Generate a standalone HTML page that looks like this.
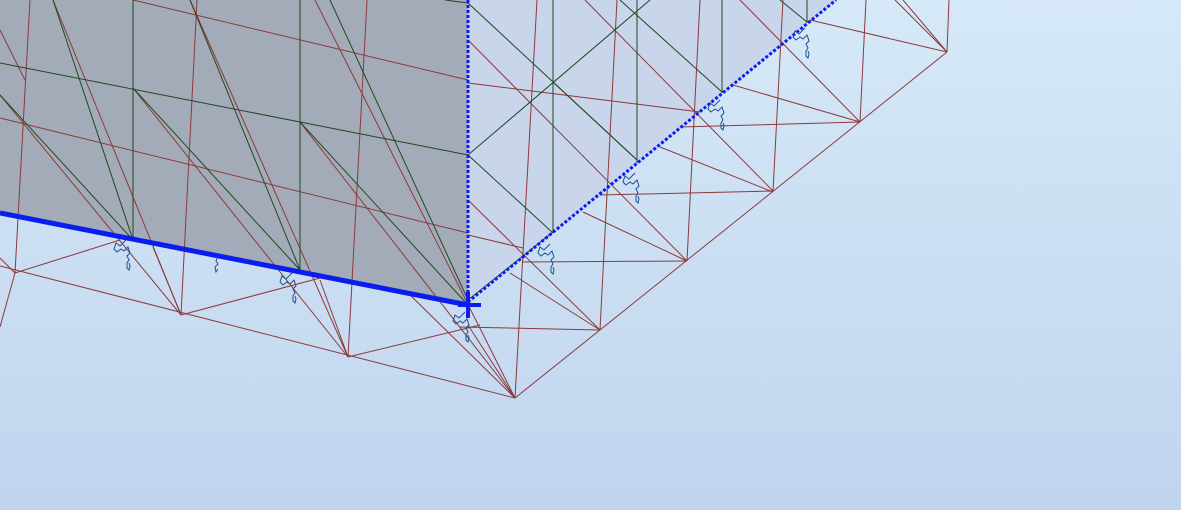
<!DOCTYPE html>
<html><head><meta charset="utf-8"><style>
html,body{margin:0;padding:0;width:1181px;height:510px;overflow:hidden}
svg{display:block}
</style></head><body>
<svg width="1181" height="510" viewBox="0 0 1181 510" xmlns="http://www.w3.org/2000/svg">
<defs><linearGradient id="bg" x1="0" y1="0" x2="0" y2="1">
<stop offset="0" stop-color="#d6e9f8"/><stop offset="1" stop-color="#c0d4ee"/></linearGradient>
<path id="s" d="M0,0 l-6,6 l-4,-3 l-2,6 l3,3 l4,-3 l3,2 l4,-4 l2,6 l-3,3 l2,4 l-2,3 l0,5 l2,2 l1,-4 l-1,-3"/>
</defs>
<rect width="1181" height="510" fill="url(#bg)"/>
<polygon points="0,0 468,0 468,305 0,213" fill="#a3abb9"/>
<polygon points="468,0 836,0 468,303" fill="#c9d5ea"/>
<g stroke="#8b3a3a" stroke-width="1" fill="none">
<line x1="0" y1="266" x2="515" y2="398"/>
<line x1="0" y1="258" x2="15" y2="273"/>
<line x1="15" y1="273" x2="120" y2="240"/>
<line x1="181" y1="315" x2="320" y2="278"/>
<line x1="348" y1="357" x2="480" y2="325"/>
<line x1="153" y1="247" x2="181" y2="315"/>
<line x1="320" y1="280" x2="348" y2="357"/>
<line x1="30" y1="0" x2="15" y2="273"/>
<line x1="197" y1="0" x2="181" y2="315"/>
<line x1="367" y1="0" x2="348" y2="357"/>
<line x1="53" y1="0" x2="181" y2="315"/>
<line x1="0" y1="95" x2="181" y2="315"/>
<line x1="190" y1="0" x2="348" y2="357"/>
<line x1="133" y1="88" x2="348" y2="357"/>
<line x1="315" y1="0" x2="515" y2="398"/>
<line x1="300" y1="122" x2="515" y2="398"/>
<line x1="133" y1="0" x2="468" y2="80"/>
<line x1="0" y1="118" x2="468" y2="233"/>
<line x1="0" y1="30" x2="25" y2="80"/>
<line x1="515" y1="398" x2="947" y2="52"/>
<line x1="537" y1="0" x2="515" y2="398"/>
<line x1="617" y1="0" x2="600" y2="330"/>
<line x1="700" y1="0" x2="687" y2="261"/>
<line x1="783" y1="0" x2="773" y2="191"/>
<line x1="866" y1="0" x2="860" y2="122"/>
<line x1="949" y1="0" x2="947" y2="52"/>
<line x1="460" y1="327" x2="600" y2="330"/>
<line x1="522" y1="262" x2="687" y2="261"/>
<line x1="600" y1="195" x2="773" y2="191"/>
<line x1="680" y1="127" x2="860" y2="122"/>
<line x1="810" y1="20" x2="947" y2="52"/>
<line x1="733" y1="85" x2="860" y2="122"/>
<line x1="660" y1="147" x2="773" y2="192"/>
<line x1="583" y1="212" x2="687" y2="261"/>
<line x1="510" y1="273" x2="600" y2="330"/>
<line x1="0" y1="327" x2="15" y2="273"/>
<line x1="515" y1="398" x2="405" y2="290"/>
<line x1="600" y1="330" x2="468" y2="200"/>
<line x1="687" y1="261" x2="468" y2="40"/>
<line x1="773" y1="191" x2="585" y2="0"/>
<line x1="860" y1="122" x2="740" y2="0"/>
<line x1="947" y1="52" x2="895" y2="0"/>
<line x1="947" y1="52" x2="903" y2="0"/>
<line x1="468" y1="83" x2="700" y2="112"/>
<line x1="468" y1="235" x2="523" y2="248"/>
<line x1="468" y1="325" x2="515" y2="398"/>
</g>
<g stroke="#1e4a1e" stroke-width="1" fill="none">
<line x1="133" y1="0" x2="133" y2="240"/>
<line x1="300" y1="0" x2="300" y2="270"/>
<line x1="53" y1="0" x2="133" y2="240"/>
<line x1="0" y1="95" x2="133" y2="240"/>
<line x1="190" y1="0" x2="300" y2="270"/>
<line x1="133" y1="88" x2="300" y2="270"/>
<line x1="330" y1="0" x2="468" y2="300"/>
<line x1="300" y1="122" x2="468" y2="305"/>
<line x1="0" y1="63" x2="468" y2="155"/>
<line x1="445" y1="0" x2="468" y2="3"/>
<line x1="553" y1="0" x2="553" y2="233"/>
<line x1="637" y1="0" x2="637" y2="163"/>
<line x1="722" y1="0" x2="722" y2="93"/>
<line x1="807" y1="0" x2="807" y2="23"/>
<line x1="468" y1="155" x2="650" y2="0"/>
<line x1="468" y1="3" x2="637" y2="160"/>
<line x1="468" y1="155" x2="553" y2="233"/>
<line x1="620" y1="0" x2="722" y2="92"/>
<line x1="780" y1="0" x2="807" y2="22"/>
<line x1="468" y1="300" x2="553" y2="232"/>
<line x1="553" y1="82" x2="637" y2="160"/>
</g>
<line x1="0" y1="213" x2="468" y2="305" stroke="#0a1cf0" stroke-width="5"/>
<line x1="468" y1="0" x2="468" y2="300" stroke="#0a1cf0" stroke-width="3" stroke-dasharray="3,2"/>
<line x1="468" y1="302" x2="836" y2="0" stroke="#0a1cf0" stroke-width="3" stroke-dasharray="3,2"/>
<line x1="468" y1="292" x2="468" y2="318" stroke="#0a1cf0" stroke-width="4"/>
<line x1="458" y1="305" x2="481" y2="305" stroke="#0a1cf0" stroke-width="4"/>
<g stroke="#1d4f94" stroke-width="1" fill="none">
<use href="#s" x="126" y="240"/>
<use href="#s" x="292" y="273"/>
<use href="#s" x="465" y="312"/>
<use href="#s" x="550" y="244"/>
<use href="#s" x="635" y="173"/>
<use href="#s" x="720" y="100"/>
<use href="#s" x="805" y="28"/>
<path d="M218,256 l-2,5 l2,3 l-3,3 l1,5 l2,-3"/>
</g>
</svg>
</body></html>
